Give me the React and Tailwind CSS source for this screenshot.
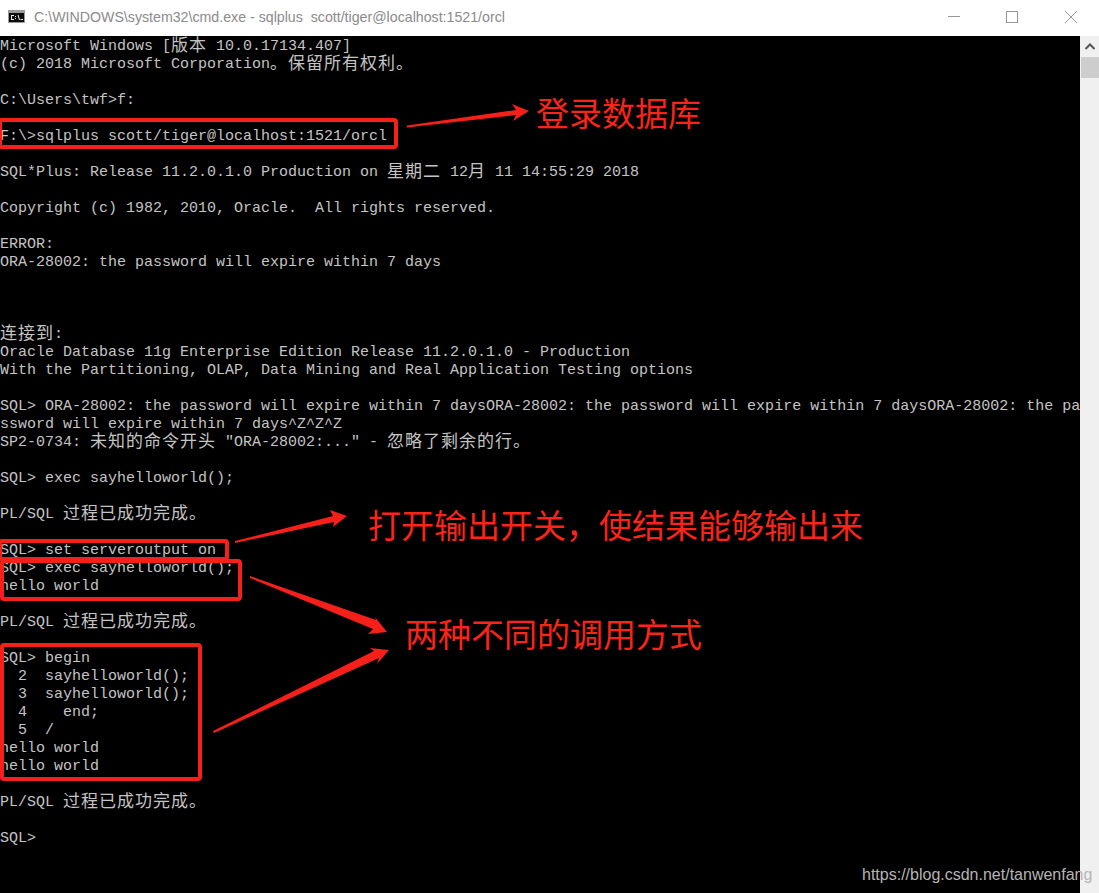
const LINES = [
  ["Microsoft Windows [", "版本", " 10.0.17134.407]"],
  ["(c) 2018 Microsoft Corporation", "。保留所有权利。"],
  [""],
  ["C:\\Users\\twf>f:"],
  [""],
  ["F:\\>sqlplus scott/tiger@localhost:1521/orcl"],
  [""],
  ["SQL*Plus: Release 11.2.0.1.0 Production on ", "星期二", " 12", "月", " 11 14:55:29 2018"],
  [""],
  ["Copyright (c) 1982, 2010, Oracle.  All rights reserved."],
  [""],
  ["ERROR:"],
  ["ORA-28002: the password will expire within 7 days"],
  [""],
  [""],
  [""],
  ["", "连接到", ":"],
  ["Oracle Database 11g Enterprise Edition Release 11.2.0.1.0 - Production"],
  ["With the Partitioning, OLAP, Data Mining and Real Application Testing options"],
  [""],
  ["SQL> ORA-28002: the password will expire within 7 daysORA-28002: the password will expire within 7 daysORA-28002: the pa"],
  ["ssword will expire within 7 days^Z^Z^Z"],
  ["SP2-0734: ", "未知的命令开头", " \"ORA-28002:...\" - ", "忽略了剩余的行。"],
  [""],
  ["SQL> exec sayhelloworld();"],
  [""],
  ["PL/SQL ", "过程已成功完成。"],
  [""],
  ["SQL> set serveroutput on"],
  ["SQL> exec sayhelloworld();"],
  ["hello world"],
  [""],
  ["PL/SQL ", "过程已成功完成。"],
  [""],
  ["SQL> begin"],
  ["  2  sayhelloworld();"],
  ["  3  sayhelloworld();"],
  ["  4    end;"],
  ["  5  /"],
  ["hello world"],
  ["hello world"],
  [""],
  ["PL/SQL ", "过程已成功完成。"],
  [""],
  ["SQL>"],
];

function Line({ parts }) {
  return (
    <div className="h-[18px] leading-[22px] whitespace-pre">
      {parts.map((p, i) =>
        i % 2 === 1 ? (
          <span key={i} className="inline-block align-top h-[18px] leading-[16px] text-[17px] tracking-[1px] font-['Noto_Sans_CJK_SC','Liberation_Mono',monospace]">{p}</span>
        ) : (
          <span key={i}>{p}</span>
        )
      )}
    </div>
  );
}

function Box({ className }) {
  return <div className={"absolute border-[4px] border-[#f5201a] rounded-[4px] " + className} />;
}

function Note({ className, children }) {
  return (
    <div className={"absolute text-[33px] leading-[40px] whitespace-nowrap text-[#fa2418] font-['Noto_Sans_CJK_SC',sans-serif] " + className}>
      {children}
    </div>
  );
}

export default function App() {
  return (
    <div className="relative w-[1099px] h-[893px] overflow-hidden bg-white font-['Liberation_Mono',monospace]">
      <div className="h-[36px] flex items-center bg-white">
        <svg width="17" height="13" viewBox="0 0 17 13" className="ml-[8px] mr-[9px] mb-[3px] shrink-0">
          <rect width="17" height="13" fill="#9a9a9a" />
          <rect x="1" y="3" width="15" height="9" fill="#0c0c0c" />
          <path d="M3 5H6V6H4V9H6V10H3ZM7 6H8V7H7ZM7 8H8V9H7ZM9.5 5H10.5L12 10H11ZM12.5 9H15V10H12.5Z" fill="#e8e8e8" />
        </svg>
        <div className="flex-1 text-[14.2px] text-[#8b8b8b] whitespace-pre font-['Liberation_Sans',sans-serif]">
          C:\WINDOWS\system32\cmd.exe - sqlplus  scott/tiger@localhost:1521/orcl
        </div>
        <div className="flex items-center h-full pb-[2px]">
          <div className="w-[58px] flex justify-center">
            <svg width="12" height="12" viewBox="0 0 12 12"><path d="M0 5.5H12" stroke="#999" /></svg>
          </div>
          <div className="w-[58px] flex justify-center">
            <svg width="12" height="12" viewBox="0 0 12 12"><rect x="0.5" y="0.5" width="11" height="11" fill="none" stroke="#999" /></svg>
          </div>
          <div className="w-[58px] pl-[2px] flex justify-center">
            <svg width="12" height="12" viewBox="0 0 12 12"><path d="M0 0L12 12M12 0L0 12" stroke="#999" /></svg>
          </div>
        </div>
      </div>

      <div className="flex h-[857px]">
        <div className="w-[1080px] bg-black text-[#c4c4c4] text-[15px] overflow-hidden">
          {LINES.map((parts, i) => (
            <Line key={i} parts={parts} />
          ))}
        </div>
        <div className="w-[19px] bg-[#f0f0f0] flex flex-col items-end">
          <div className="h-[21px] w-full flex items-center justify-center">
            <svg width="10" height="7" viewBox="0 0 10 7"><path d="M0.5 6L5 1.5L9.5 6" fill="none" stroke="#555" strokeWidth="2" /></svg>
          </div>
          <div className="h-[21px] w-[18px] bg-[#cdcdcd]" />
        </div>
      </div>

      <Box className="left-[-2px] top-[118px] w-[400px] h-[31px]" />
      <Box className="left-[-2px] top-[539px] w-[231px] h-[22px]" />
      <Box className="left-0 top-[559px] w-[242px] h-[42px]" />
      <Box className="left-0 top-[643px] w-[202px] h-[138px]" />

      <svg width="1099" height="893" viewBox="0 0 1099 893" className="absolute left-0 top-0 pointer-events-none">
        <g fill="#f5201a">
          <path d="M407 125.5L516 110L512 104L529 111L513 121L516 115L407 127.5Z" />
          <path d="M235 541L333 516L330 510L347 516L333 527L334 522L235 543Z" />
          <path d="M250 576L376 620L375 617L387 632L368 634L373 629L250 578Z" />
          <path d="M213 731L374 651L370 648L389 650L377 664L379 658L214 733Z" />
        </g>
      </svg>

      <Note className="left-[536px] top-[92px]">登录数据库</Note>
      <Note className="left-[368px] top-[504px]">打开输出开关，使结果能够输出来</Note>
      <Note className="left-[405px] top-[613px]">两种不同的调用方式</Note>

      <div className="absolute left-[862px] top-[865px] text-[16px] leading-[20px] whitespace-nowrap text-[#b5b5b5] font-['Liberation_Sans',sans-serif]">
        https://blog.csdn.net/tanwenfang
      </div>
    </div>
  );
}
